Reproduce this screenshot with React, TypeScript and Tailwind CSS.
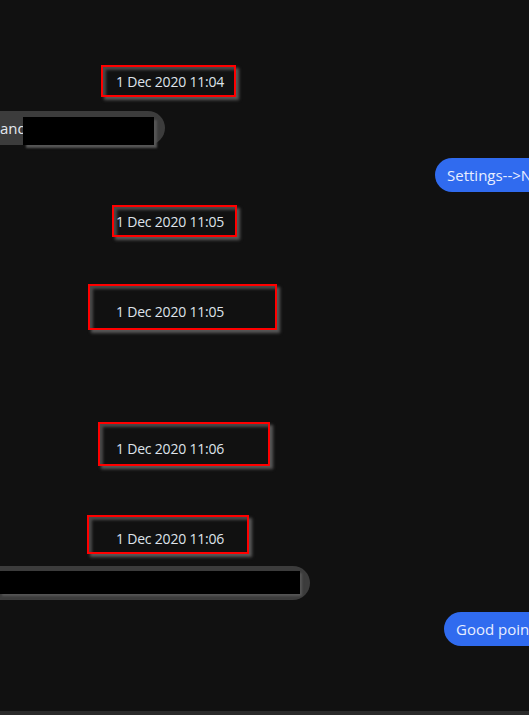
import React from "react";

const font = { fontFamily: '"Open Sans", "Noto Sans", sans-serif' };

function Stamp({ className, text }: { className: string; text: string }) {
  return (
    <div
      className={`shrink-0 flex items-center border-2 border-[#ff0000] shadow-[3px_3px_3px_#5a5a5a,inset_3px_3px_3px_#4a4a4a] text-[14px] tracking-[-0.2px] text-[#dfe3ea] whitespace-nowrap ${className}`}
    >
      {text}
    </div>
  );
}

export default function App() {
  return (
    <div className="w-[529px] h-[715px] bg-[#111111] overflow-hidden flex flex-col" style={font}>
      {/* 1 Dec 11:04 */}
      <Stamp className="mt-[65px] ml-[101px] w-[135px] h-[32px] pl-[13px]" text="1 Dec 2020 11:04" />

      {/* incoming, redacted */}
      <div className="shrink-0 mt-[14px] -ml-[30px] w-[195px] h-[34px] rounded-full bg-[#3c3c3c] flex items-start">
        <span className="ml-[30px] mt-[6px] text-[15px] leading-[22px] text-[#e4e8ef] w-[23px] overflow-hidden whitespace-nowrap">and</span>
        <div className="mt-[6px] w-[131px] h-[28px] bg-black shadow-[3px_3px_2px_#555]"></div>
      </div>

      {/* outgoing */}
      <div className="shrink-0 mt-[13px] ml-[435px] h-[34px] w-[200px] rounded-l-full bg-[#306bef] flex items-center pl-[12px] text-[15px] text-[#e8eeff] whitespace-nowrap">
        Settings--&gt;Notifications
      </div>

      <Stamp className="mt-[13px] ml-[112px] w-[125px] h-[32px] pl-[2px]" text="1 Dec 2020 11:05" />
      <Stamp className="mt-[47px] ml-[88px] w-[189px] h-[46px] pl-[26px] pt-[8px]" text="1 Dec 2020 11:05" />
      <Stamp className="mt-[92px] ml-[98px] w-[172px] h-[44px] pl-[16px] pt-[8px]" text="1 Dec 2020 11:06" />
      <Stamp className="mt-[49px] ml-[87px] w-[162px] h-[39px] pl-[27px] pt-[8px]" text="1 Dec 2020 11:06" />

      {/* incoming, redacted */}
      <div className="shrink-0 mt-[12px] -ml-[30px] w-[340px] h-[34px] rounded-full bg-[#3c3c3c] flex items-start">
        <div className="ml-[30px] mt-[5px] w-[300px] h-[23px] bg-black shadow-[2px_2px_2px_#555]"></div>
      </div>

      {/* outgoing */}
      <div className="shrink-0 mt-[12px] ml-[444px] h-[34px] w-[200px] rounded-l-full bg-[#306bef] flex items-center pl-[12px] text-[15px] text-[#e8eeff] whitespace-nowrap">
        Good point, thanks
      </div>

      <div className="mt-auto shrink-0 h-[4px] bg-[#2a2a2a]"></div>
    </div>
  );
}
